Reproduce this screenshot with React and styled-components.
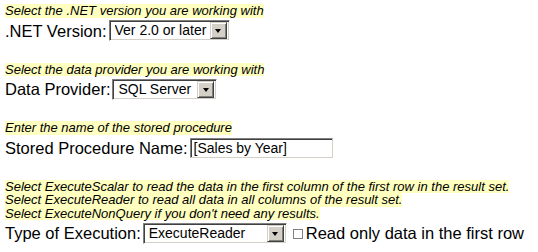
import React from "react";
import styled, { createGlobalStyle } from "styled-components";

const Global = createGlobalStyle`
  html, body { margin: 0; padding: 0; background: #fff; }
  body { font-family: "Liberation Sans", Arial, sans-serif; color: #000; }
`;

const Page = styled.div`
  padding: 4px 5px;
  display: flex;
  flex-direction: column;
  gap: 21px;
`;

const Group = styled.div`
  display: flex;
  flex-direction: column;
`;

const Hints = styled.div`
  display: flex;
  flex-direction: column;
  align-items: flex-start;
`;

const Hint = styled.span`
  background: #ffffc0;
  font-style: italic;
  font-size: 13px;
  line-height: 13px;
  padding-bottom: 0.5px;
  white-space: nowrap;
`;

const Row = styled.div`
  display: flex;
  align-items: center;
  height: 22px;
  margin-top: 2px;
  white-space: nowrap;
`;

const Label = styled.span`
  font-size: 16.5px;
  line-height: 18px;
  margin-right: ${(p) => p.$gap ?? 2}px;
`;

const Select = styled.div`
  display: flex;
  align-items: center;
  width: ${(p) => p.$w}px;
  height: 21px;
  box-sizing: border-box;
  border-top: 1px solid #808080;
  border-left: 1px solid #808080;
  border-right: 1px solid #fff;
  border-bottom: 1px solid #fff;
  box-shadow: inset 1px 1px 0 #404040, inset -1px -1px 0 #d4d0c8;
  background: #fff;
  padding: 2px 2px 2px 5px;
`;

const SelectText = styled.span`
  flex: 1;
  font-size: 14px;
  line-height: 15px;
  white-space: nowrap;
  overflow: hidden;
`;

const DropButton = styled.span`
  width: 17px;
  height: 17px;
  box-sizing: border-box;
  background: #d4d0c8;
  border-top: 1px solid #d4d0c8;
  border-left: 1px solid #d4d0c8;
  border-right: 1px solid #404040;
  border-bottom: 1px solid #404040;
  box-shadow: inset 1px 1px 0 #fff, inset -1px -1px 0 #808080;
  display: flex;
  align-items: center;
  justify-content: center;
`;

const Arrow = styled.span`
  width: 0;
  height: 0;
  border-left: 3.5px solid transparent;
  border-right: 3.5px solid transparent;
  border-top: 4px solid #000;
  margin-top: 1px;
`;

const TextInput = styled.div`
  width: ${(p) => p.$w}px;
  height: 20px;
  box-sizing: border-box;
  border-top: 1px solid #808080;
  border-left: 1px solid #808080;
  border-right: 1px solid #d4d0c8;
  border-bottom: 1px solid #d4d0c8;
  box-shadow: inset 1px 1px 0 #404040;
  padding: 2px 3px;
  font-size: 14px;
  line-height: 15px;
  background: #fff;
`;

const CheckWrap = styled.label`
  display: flex;
  align-items: center;
  margin-left: 6px;
`;

const Box = styled.span`
  width: 10px;
  height: 10px;
  box-sizing: border-box;
  border: 1px solid #808080;
  background: #fff;
  margin-right: 3px;
  margin-top: 1px;
`;

const DropDown = ({ w, children }) => (
  <Select $w={w}>
    <SelectText>{children}</SelectText>
    <DropButton>
      <Arrow />
    </DropButton>
  </Select>
);

export default function App() {
  return (
    <>
      <Global />
      <Page>
        <Group>
          <Hints>
            <Hint>Select the .NET version you are working with</Hint>
          </Hints>
          <Row>
            <Label>.NET Version:</Label>
            <DropDown w={121}>Ver 2.0 or later</DropDown>
          </Row>
        </Group>
        <Group>
          <Hints>
            <Hint>Select the data provider you are working with</Hint>
          </Hints>
          <Row>
            <Label>Data Provider:</Label>
            <DropDown w={105}>SQL Server</DropDown>
          </Row>
        </Group>
        <Group>
          <Hints>
            <Hint>Enter the name of the stored procedure</Hint>
          </Hints>
          <Row>
            <Label $gap={2}>Stored Procedure Name:</Label>
            <TextInput $w={143}>[Sales by Year]</TextInput>
          </Row>
        </Group>
        <Group>
          <Hints>
            <Hint>Select ExecuteScalar to read the data in the first column of the first row in the result set.</Hint>
            <Hint>Select ExecuteReader to read all data in all columns of the result set.</Hint>
            <Hint>Select ExecuteNonQuery if you don't need any results.</Hint>
          </Hints>
          <Row>
            <Label>Type of Execution:</Label>
            <DropDown w={144}>ExecuteReader</DropDown>
            <CheckWrap>
              <Box />
              <Label $gap={0}>Read only data in the first row</Label>
            </CheckWrap>
          </Row>
        </Group>
      </Page>
    </>
  );
}
